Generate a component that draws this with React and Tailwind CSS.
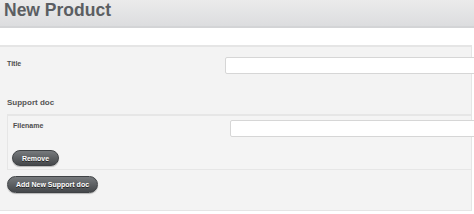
export default function App() {
  const font = { fontFamily: '"Liberation Sans", Arial, sans-serif' }
  const btn =
    'rounded-full bg-gradient-to-b from-[#777a7d] to-[#45484b] border border-[#3f4245] text-white text-[7px] font-bold leading-none [text-shadow:0_1px_0_#222] shadow-[0_1px_1px_rgba(0,0,0,0.25)] shrink-0'

  return (
    <div className="w-[474px] h-[214px] overflow-hidden bg-white" style={font}>
      <div className="h-[28px] bg-gradient-to-b from-[#ebebeb] to-[#dcdddf] border-b-2 border-[#d3d4d6] px-[4px] flex items-start">
        <h1 className="text-[17.5px] font-bold text-[#5b5e62] leading-none mt-[2px]">New Product</h1>
      </div>

      <div className="mt-[17px] w-[472px] h-[166px] bg-[#f3f3f3] border-t-2 border-r border-b border-[#e5e5e5] flex flex-col">
        <div className="flex items-start pt-[10px] pl-[7px]">
          <span className="w-[218px] shrink-0 text-[7px] font-bold text-[#4d4d4d] leading-none mt-[3px]">Title</span>
          <input className="w-[260px] shrink-0 h-[17px] bg-white border border-[#d6d6d6] rounded-[2px] outline-none" />
        </div>

        <div className="pl-[7px] mt-[25px] text-[8px] font-bold text-[#555] leading-none">Support doc</div>

        <div className="ml-[7px] mt-[7px] h-[56px] border-t-2 border-l border-b border-[#e6e6e6] bg-[#f4f4f4] flex flex-col">
          <div className="flex items-start pt-[4px] pl-[5px]">
            <span className="w-[217px] shrink-0 text-[7px] font-bold text-[#4d4d4d] leading-none mt-[2px]">Filename</span>
            <input className="w-[260px] shrink-0 h-[17px] bg-white border border-[#d6d6d6] rounded-[2px] outline-none" />
          </div>
          <div className="flex pl-[4px] mt-[13px]">
            <button className={btn + ' w-[47px] h-[16px]'}>Remove</button>
          </div>
        </div>

        <div className="flex pl-[7px] mt-[6px]">
          <button className={btn + ' w-[91px] h-[17px]'}>Add New Support doc</button>
        </div>
      </div>
    </div>
  )
}
